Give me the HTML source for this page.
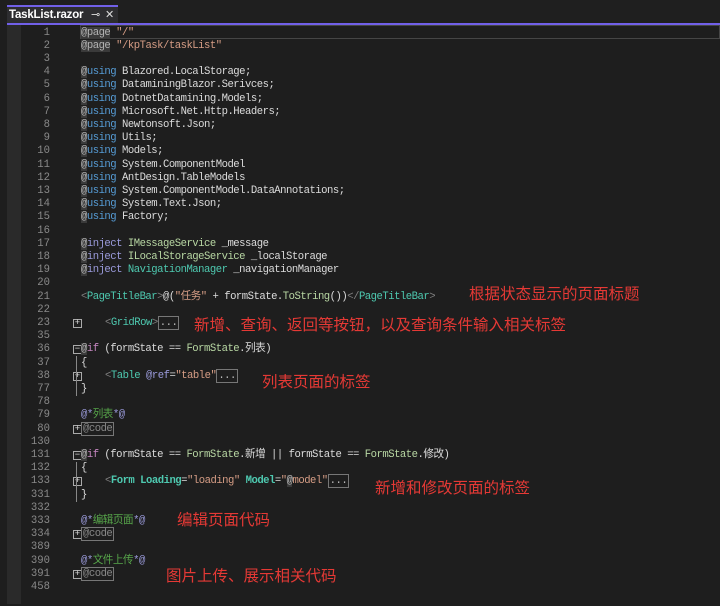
<!DOCTYPE html>
<html><head><meta charset="utf-8"><style>
*{margin:0;padding:0;box-sizing:border-box}
body{width:720px;height:604px;background:#1e1e1e;position:relative;overflow:hidden;font-family:"Liberation Mono","Noto Sans CJK SC",monospace}
.top{position:absolute;left:0;top:0;width:720px;height:24px;background:#1f1f1f}
.tab{position:absolute;left:7px;top:5px;width:111px;height:19px;background:#2d2d30;border-top:2px solid #7160e8}
.tab span{position:absolute;left:2px;top:2px;font:bold 11.5px "Liberation Sans",sans-serif;color:#fff;letter-spacing:-0.2px}
.tab i{position:absolute;top:1px;font-style:normal;color:#ddd;font:11px "Liberation Sans",sans-serif}
.bar{position:absolute;left:7px;top:23px;width:713px;height:2px;background:#7160e8}
.gut{position:absolute;left:7px;top:25px;width:14px;height:579px;background:#2a2a2a}
.rows{position:absolute;left:0;top:2px;width:720px;height:604px}
.row{position:absolute;left:0;height:13.2px;width:720px;font-size:10.6px;letter-spacing:-0.5px;line-height:13.2px;white-space:pre;color:#dcdcdc}
.n{position:absolute;left:20px;width:30px;text-align:right;color:#8a8a8a;letter-spacing:0}
.c{position:absolute;left:81px}
.at{background:#3a3a3a;color:#b4b4b4}
.k{color:#569cd6}.s{color:#d69d85}.t{color:#4ec9b0}.g{color:#808080}.y{color:#b8d7a3}.p{color:#c586c0}.cm{color:#57a64a}.ip{color:#9b9bdc}.a{color:#4ec9b0;font-weight:bold}
.box{border:1px solid #777;padding:0 1px;color:#bbb}
.f{position:absolute;left:73px;top:2px;width:9px;height:9px;border:1px solid #aaa;font-size:9px;line-height:7px;text-align:center;color:#ddd;letter-spacing:0}
.vl{position:absolute;left:76px;width:1px;background:#888}
.r{position:absolute;color:#e53935;font:15.5px "Noto Sans CJK SC",sans-serif;white-space:nowrap;line-height:18px}
.cur{position:absolute;left:80px;top:25px;width:640px;height:14px;border:1px solid #464646}
</style></head><body>
<div class="top"></div>
<div class="tab"><span>TaskList.razor</span><i style="left:84px">⊸</i><i style="left:98px">✕</i></div>
<div class="bar"></div>
<div class="gut"></div>
<div class="cur"></div>
<div class="rows">
<div class="row" style="top:24.5px"><span class="n">1</span><span class="c"><span class="at">@</span><span class="at">page</span> <span class="s">"/"</span></span></div>
<div class="row" style="top:37.7px"><span class="n">2</span><span class="c"><span class="at">@</span><span class="at">page</span> <span class="s">"/kpTask/taskList"</span></span></div>
<div class="row" style="top:50.9px"><span class="n">3</span></div>
<div class="row" style="top:64.1px"><span class="n">4</span><span class="c"><span class="at">@</span><span class="k">using</span> Blazored.LocalStorage;</span></div>
<div class="row" style="top:77.3px"><span class="n">5</span><span class="c"><span class="at">@</span><span class="k">using</span> DataminingBlazor.Serivces;</span></div>
<div class="row" style="top:90.5px"><span class="n">6</span><span class="c"><span class="at">@</span><span class="k">using</span> DotnetDatamining.Models;</span></div>
<div class="row" style="top:103.7px"><span class="n">7</span><span class="c"><span class="at">@</span><span class="k">using</span> Microsoft.Net.Http.Headers;</span></div>
<div class="row" style="top:116.9px"><span class="n">8</span><span class="c"><span class="at">@</span><span class="k">using</span> Newtonsoft.Json;</span></div>
<div class="row" style="top:130.1px"><span class="n">9</span><span class="c"><span class="at">@</span><span class="k">using</span> Utils;</span></div>
<div class="row" style="top:143.3px"><span class="n">10</span><span class="c"><span class="at">@</span><span class="k">using</span> Models;</span></div>
<div class="row" style="top:156.5px"><span class="n">11</span><span class="c"><span class="at">@</span><span class="k">using</span> System.ComponentModel</span></div>
<div class="row" style="top:169.7px"><span class="n">12</span><span class="c"><span class="at">@</span><span class="k">using</span> AntDesign.TableModels</span></div>
<div class="row" style="top:182.9px"><span class="n">13</span><span class="c"><span class="at">@</span><span class="k">using</span> System.ComponentModel.DataAnnotations;</span></div>
<div class="row" style="top:196.1px"><span class="n">14</span><span class="c"><span class="at">@</span><span class="k">using</span> System.Text.Json;</span></div>
<div class="row" style="top:209.3px"><span class="n">15</span><span class="c"><span class="at">@</span><span class="k">using</span> Factory;</span></div>
<div class="row" style="top:222.5px"><span class="n">16</span></div>
<div class="row" style="top:235.7px"><span class="n">17</span><span class="c"><span class="at">@</span><span class="ip">inject</span> <span class="y">IMessageService</span> _message</span></div>
<div class="row" style="top:248.9px"><span class="n">18</span><span class="c"><span class="at">@</span><span class="ip">inject</span> <span class="y">ILocalStorageService</span> _localStorage</span></div>
<div class="row" style="top:262.1px"><span class="n">19</span><span class="c"><span class="at">@</span><span class="ip">inject</span> <span class="t">NavigationManager</span> _navigationManager</span></div>
<div class="row" style="top:275.3px"><span class="n">20</span></div>
<div class="row" style="top:288.5px"><span class="n">21</span><span class="c"><span class="g">&lt;</span><span class="t">PageTitleBar</span><span class="g">&gt;</span>@(<span class="s">"任务"</span> + formState.<span class="y">ToString</span>())<span class="g">&lt;/</span><span class="t">PageTitleBar</span><span class="g">&gt;</span></span></div>
<div class="row" style="top:301.7px"><span class="n">22</span></div>
<div class="row" style="top:314.9px"><span class="n">23</span><span class="f">+</span><span class="c" style="left:105px"><span class="g">&lt;</span><span class="t">GridRow</span><span class="g">&gt;</span><span class="box">...</span></span></div>
<div class="row" style="top:328.1px"><span class="n">35</span></div>
<div class="row" style="top:341.3px"><span class="n">36</span><span class="f">−</span><span class="c"><span class="at">@</span><span class="p">if</span> (formState == <span class="y">FormState</span>.列表)</span></div>
<div class="row" style="top:354.5px"><span class="n">37</span><span class="c">{</span></div>
<div class="row" style="top:367.7px"><span class="n">38</span><span class="f">+</span><span class="c" style="left:105px"><span class="g">&lt;</span><span class="t">Table</span> <span class="ip">@ref</span>=<span class="s">"table"</span><span class="box">...</span></span></div>
<div class="row" style="top:380.9px"><span class="n">77</span><span class="c">}</span></div>
<div class="row" style="top:394.1px"><span class="n">78</span></div>
<div class="row" style="top:407.3px"><span class="n">79</span><span class="c"><span class="ip">@*</span><span class="cm">列表</span><span class="ip">*@</span></span></div>
<div class="row" style="top:420.5px"><span class="n">80</span><span class="f">+</span><span class="c"><span class="box" style="color:#888">@code</span></span></div>
<div class="row" style="top:433.7px"><span class="n">130</span></div>
<div class="row" style="top:446.9px"><span class="n">131</span><span class="f">−</span><span class="c"><span class="at">@</span><span class="p">if</span> (formState == <span class="y">FormState</span>.新增 || formState == <span class="y">FormState</span>.修改)</span></div>
<div class="row" style="top:460.1px"><span class="n">132</span><span class="c">{</span></div>
<div class="row" style="top:473.3px"><span class="n">133</span><span class="f">+</span><span class="c" style="left:105px"><span class="g">&lt;</span><span class="a">Form</span> <span class="a">Loading</span>=<span class="s">"loading"</span> <span class="a">Model</span>=<span class="s">"<span class="at">@</span>model"</span><span class="box">...</span></span></div>
<div class="row" style="top:486.5px"><span class="n">331</span><span class="c">}</span></div>
<div class="row" style="top:499.7px"><span class="n">332</span></div>
<div class="row" style="top:512.9px"><span class="n">333</span><span class="c"><span class="ip">@*</span><span class="cm">编辑页面</span><span class="ip">*@</span></span></div>
<div class="row" style="top:526.1px"><span class="n">334</span><span class="f">+</span><span class="c"><span class="box" style="color:#888">@code</span></span></div>
<div class="row" style="top:539.3px"><span class="n">389</span></div>
<div class="row" style="top:552.5px"><span class="n">390</span><span class="c"><span class="ip">@*</span><span class="cm">文件上传</span><span class="ip">*@</span></span></div>
<div class="row" style="top:565.7px"><span class="n">391</span><span class="f">+</span><span class="c"><span class="box" style="color:#888">@code</span></span></div>
<div class="row" style="top:578.9px"><span class="n">458</span></div>
<div class="vl" style="top:354px;height:40px"></div>
<div class="vl" style="top:460px;height:40px"></div>
</div>
<div class="r" style="left:469px;top:284px">根据状态显示的页面标题</div>
<div class="r" style="left:194px;top:315px">新增、查询、返回等按钮，以及查询条件输入相关标签</div>
<div class="r" style="left:262px;top:372px">列表页面的标签</div>
<div class="r" style="left:375px;top:478px">新增和修改页面的标签</div>
<div class="r" style="left:177px;top:510px">编辑页面代码</div>
<div class="r" style="left:166px;top:566px">图片上传、展示相关代码</div>
</body></html>
